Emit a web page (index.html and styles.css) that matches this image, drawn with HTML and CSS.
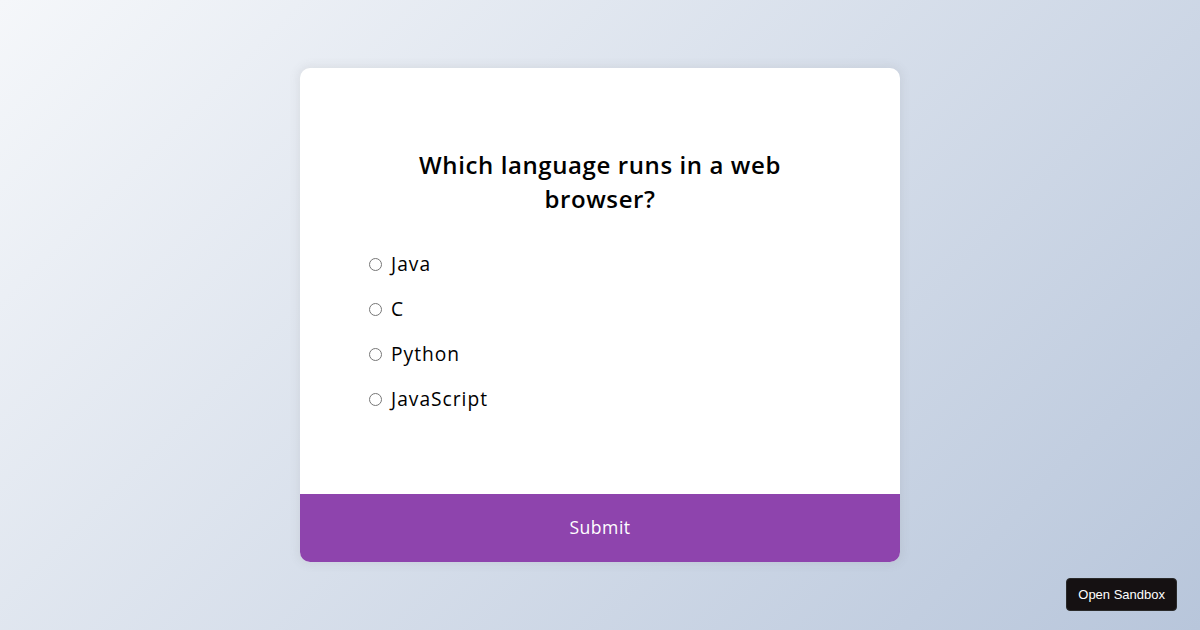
FILE: index.html
```html
<!DOCTYPE html>
<html lang="en">
<head>
<meta charset="UTF-8">
<title>Quiz App</title>
<link rel="stylesheet" href="styles.css">
</head>
<body>
<div class="quiz-container">
  <div class="quiz-header">
    <h2 class="question">Which language runs in a web browser?</h2>
    <ul class="answers">
      <li><input type="radio" name="answer" id="a"> <label for="a">Java</label></li>
      <li><input type="radio" name="answer" id="b"> <label for="b">C</label></li>
      <li><input type="radio" name="answer" id="c"> <label for="c">Python</label></li>
      <li><input type="radio" name="answer" id="d"> <label for="d">JavaScript</label></li>
    </ul>
  </div>
  <button class="submit">Submit</button>
</div>
<a class="sandbox-btn">Open Sandbox</a>
</body>
</html>
```
FILE: styles.css
```css
* { box-sizing: border-box; }
html, body { margin: 0; height: 100%; }
body {
  font-family: "Open Sans", "Noto Sans", sans-serif;
  background-color: #b8c6db;
  background-image: linear-gradient(315deg, #b8c6db 0%, #f5f7fa 100%);
  display: flex;
  align-items: center;
  justify-content: center;
  height: 100vh;
  overflow: hidden;
}
.quiz-container {
  background: #fff;
  border-radius: 10px;
  box-shadow: 0 0 10px 2px rgba(100, 100, 100, 0.1);
  width: 600px;
  overflow: hidden;
}
.quiz-header { padding: 4rem; }
.question {
  padding: 16px 16px 18px;
  margin: 0;
  text-align: center;
  font-size: 24px;
  font-weight: 600;
  line-height: 34px;
  letter-spacing: 0.6px;
  color: #000;
}
.answers {
  list-style: none;
  padding: 0;
  margin: 16px 0;
}
.answers li {
  font-size: 1.2rem;
  line-height: 28.8px;
  margin: 1rem 0;
  letter-spacing: 1px;
}
.answers input { margin: 3px 3px 0 5px; }
.submit {
  background-color: #8e44ad;
  color: #fff;
  border: none;
  display: block;
  width: 100%;
  cursor: pointer;
  font-size: 1.1rem;
  font-family: inherit;
  line-height: 26.4px;
  letter-spacing: 0.5px;
  padding: 1.3rem;
}
.sandbox-btn {
  position: fixed;
  right: 23px;
  bottom: 19px;
  background: #151112;
  color: #fff;
  font-family: "Liberation Sans", Arial, sans-serif;
  font-size: 13px;
  line-height: 31px;
  padding: 0 11px;
  border-radius: 4px;
  border: 1px solid #2a2a2a;
}
```
